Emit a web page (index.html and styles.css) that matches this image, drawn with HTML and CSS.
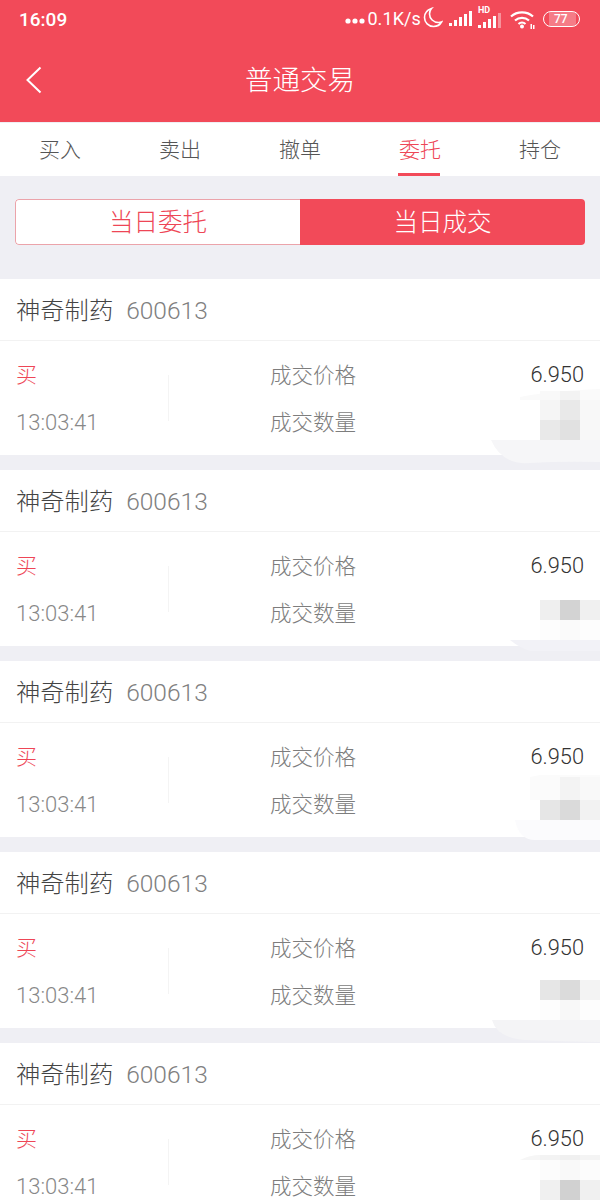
FILE: index.html
```html
<!DOCTYPE html>
<html lang="zh-CN">
<head>
<meta charset="utf-8">
<title>普通交易</title>
<link rel="stylesheet" href="styles.css">
</head>
<body>
<header class="hero">
  <div class="status">
    <span class="clock">16:09</span>
    <div class="status-right">
      <svg class="ic-dots" width="20" height="6" viewBox="0 0 20 6"><circle cx="3" cy="3" r="2.6"/><circle cx="10" cy="3" r="2.6"/><circle cx="17" cy="3" r="2.6"/></svg>
      <span class="speed">0.1K/s</span>
      <svg class="ic-moon" width="20" height="22" viewBox="0 0 20 22"><path d="M8.5 1.5C4 3 1.5 6.5 1.5 10.500c0 5 4 9 9 9 3.500 0 6.500-1.700 8-4.500-1 .4-2 .5-3 .5-5 0-9-3.800-9-8.500 0-2 .7-4 2-5.500z"/></svg>
      <svg class="ic-signal" width="23" height="16" viewBox="0 0 23 16"><rect x="0" y="12" width="3" height="3"/><rect x="5" y="9" width="3" height="6"/><rect x="10" y="6" width="3" height="9"/><rect x="15" y="3" width="3" height="12"/><rect x="20" y="0" width="3" height="15"/></svg>
      <span class="hd-wrap">
        <span class="hd">HD</span>
        <svg class="ic-signal2" width="23" height="16" viewBox="0 0 23 16"><rect x="0" y="12" width="3" height="3"/><rect x="5" y="9" width="3" height="6"/><rect x="10" y="6" width="3" height="9"/><rect x="15" y="3" width="3" height="12"/><rect class="dim" x="20" y="0" width="3" height="15"/></svg>
      </span>
      <svg class="ic-wifi" width="25" height="19" viewBox="0 0 25 19"><path d="M1 6.500C7 1 17 1 23 6.500M5 10.500c4-3.500 10-3.500 14 0M8.500 14c2-1.800 5-1.800 7 0"/><circle cx="12" cy="16.500" r="2"/><rect x="20.500" y="14" width="1.500" height="5"/><rect x="23" y="15" width="1.500" height="4"/></svg>
      <div class="battery"><div class="battery-fill"></div><span class="battery-num">77</span></div>
    </div>
  </div>
  <div class="navbar">
    <svg class="back" width="18" height="28" viewBox="0 0 18 28"><path d="M15.500 1.500 2.500 14l13 12.500"/></svg>
    <h1 class="title">普通交易</h1>
  </div>
</header>

<nav class="tabs">
  <a class="tab">买入</a>
  <a class="tab">卖出</a>
  <a class="tab">撤单</a>
  <a class="tab tab-on">委托</a>
  <a class="tab">持仓</a>
</nav>

<div class="seg-wrap">
  <div class="seg">
    <div class="seg-item">当日委托</div>
    <div class="seg-item seg-on">当日成交</div>
  </div>
</div>

<main class="list">
  <section class="card">
    <div class="card-head"><span class="name">神奇制药</span><span class="code">600613</span></div>
    <div class="card-body">
      <div class="col-left"><div class="row buy">买</div><div class="row time">13:03:41</div></div>
      <div class="divider"></div>
      <div class="col-mid"><div class="row label">成交价格</div><div class="row label">成交数量</div></div>
      <div class="col-right"><div class="row value">6.950</div></div>
    </div>
    <svg class="mosaic" width="200" height="191" viewBox="0 0 200 191">
      <path fill="#fafafa" d="M120 121v-3q30-6 80-8v11z"/>
      <rect x="140" y="112" width="20" height="9" fill="#f9f9f9"/><rect x="160" y="112" width="20" height="9" fill="#f3f3f3"/><rect x="180" y="112" width="20" height="9" fill="#fafafa"/>
      <rect x="140" y="121" width="20" height="20" fill="#f5f5f5"/><rect x="160" y="121" width="20" height="20" fill="#e9e9e9"/><rect x="180" y="121" width="20" height="20" fill="#f8f8f8"/>
      <rect x="140" y="141" width="20" height="20" fill="#e9e9e9"/><rect x="160" y="141" width="20" height="20" fill="#e1e1e1"/><rect x="180" y="141" width="20" height="20" fill="#f8f8f8"/>
      <path fill="#f6f6f8" d="M91 161h109v22q-40-1-70 1-28 2-39-23z"/>
    </svg>
  </section>

  <section class="card">
    <div class="card-head"><span class="name">神奇制药</span><span class="code">600613</span></div>
    <div class="card-body">
      <div class="col-left"><div class="row buy">买</div><div class="row time">13:03:41</div></div>
      <div class="divider"></div>
      <div class="col-mid"><div class="row label">成交价格</div><div class="row label">成交数量</div></div>
      <div class="col-right"><div class="row value">6.950</div></div>
    </div>
    <svg class="mosaic" width="200" height="191" viewBox="0 0 200 191">
      <rect x="140" y="130" width="20" height="20" fill="#efefef"/><rect x="160" y="130" width="20" height="20" fill="#d3d3d3"/><rect x="180" y="130" width="20" height="20" fill="#f0f0f0"/>
      <rect x="140" y="150" width="20" height="20" fill="#fdfdfd"/><rect x="160" y="150" width="20" height="20" fill="#fafafa"/><rect x="180" y="150" width="20" height="20" fill="#fdfdfd"/>
      <path fill="#f2f2f7" d="M110 170h90v11q-50 0-70 0-10-3-20-11z"/>
    </svg>
  </section>

  <section class="card">
    <div class="card-head"><span class="name">神奇制药</span><span class="code">600613</span></div>
    <div class="card-body">
      <div class="col-left"><div class="row buy">买</div><div class="row time">13:03:41</div></div>
      <div class="divider"></div>
      <div class="col-mid"><div class="row label">成交价格</div><div class="row label">成交数量</div></div>
      <div class="col-right"><div class="row value">6.950</div></div>
    </div>
    <svg class="mosaic" width="200" height="191" viewBox="0 0 200 191">
      <path fill="#fbfbfb" d="M130 116q5-1 10-2h60v25h-70z"/>
      <rect x="140" y="116" width="20" height="23" fill="#fbfbfb"/><rect x="160" y="116" width="20" height="23" fill="#f3f3f3"/><rect x="180" y="116" width="20" height="23" fill="#f9f9f9"/>
      <rect x="140" y="139" width="20" height="20" fill="#e6e6e6"/><rect x="160" y="139" width="20" height="20" fill="#dadada"/><rect x="180" y="139" width="20" height="20" fill="#f2f2f2"/>
      <path fill="#fbfbfd" d="M115 159h85v20h-65q-16 0-20-20z"/>
    </svg>
  </section>

  <section class="card">
    <div class="card-head"><span class="name">神奇制药</span><span class="code">600613</span></div>
    <div class="card-body">
      <div class="col-left"><div class="row buy">买</div><div class="row time">13:03:41</div></div>
      <div class="divider"></div>
      <div class="col-mid"><div class="row label">成交价格</div><div class="row label">成交数量</div></div>
      <div class="col-right"><div class="row value">6.950</div></div>
    </div>
    <svg class="mosaic" width="200" height="191" viewBox="0 0 200 191">
      <rect x="140" y="128" width="20" height="20" fill="#e6e6e6"/><rect x="160" y="128" width="20" height="20" fill="#dbdbdb"/><rect x="180" y="128" width="20" height="20" fill="#f3f3f3"/>
      <rect x="140" y="148" width="20" height="20" fill="#fdfdfd"/><rect x="160" y="148" width="20" height="20" fill="#f8f8f8"/><rect x="180" y="148" width="20" height="20" fill="#fdfdfd"/>
      <path fill="#f4f4f6" d="M92 168h108v22q-50-1-75-2-28-2-33-20z"/>
    </svg>
  </section>

  <section class="card">
    <div class="card-head"><span class="name">神奇制药</span><span class="code">600613</span></div>
    <div class="card-body">
      <div class="col-left"><div class="row buy">买</div><div class="row time">13:03:41</div></div>
      <div class="divider"></div>
      <div class="col-mid"><div class="row label">成交价格</div><div class="row label">成交数量</div></div>
      <div class="col-right"><div class="row value">6.950</div></div>
    </div>
    <svg class="mosaic" width="200" height="191" viewBox="0 0 200 191">
      <path fill="#f6f6f6" d="M120 117q10-5 20-5h60v5z"/>
      <rect x="140" y="112" width="20" height="5" fill="#f3f3f3"/><rect x="160" y="112" width="20" height="5" fill="#f0f0f0"/><rect x="180" y="112" width="20" height="5" fill="#f4f4f4"/>
      <rect x="140" y="117" width="20" height="20" fill="#fcfcfc"/><rect x="160" y="117" width="20" height="20" fill="#f9f9f9"/><rect x="180" y="117" width="20" height="20" fill="#fcfcfc"/>
      <rect x="140" y="137" width="20" height="20" fill="#f0f0f0"/><rect x="160" y="137" width="20" height="20" fill="#d1d1d1"/><rect x="180" y="137" width="20" height="20" fill="#f0f0f0"/>
    </svg>
  </section>
</main>
</body>
</html>
```
FILE: styles.css
```css
* { box-sizing: border-box; }
html, body { margin: 0; padding: 0; }
body {
  width: 600px;
  height: 1200px;
  overflow: hidden;
  background: #efeff4;
  font-family: "Noto Sans CJK SC", "Roboto", sans-serif;
  font-weight: 400;
}
.hero { background: #f24a59; height: 122px; color: #fff; }
.status {
  height: 38px;
  padding: 0 20px 0 19px;
  display: flex;
  align-items: center;
  justify-content: space-between;
}
.clock { font: 500 19px/1 "Roboto", sans-serif; }
.status-right { display: flex; align-items: center; }
.ic-dots { fill: #fff; margin: 3px 2px 0 0; }
.speed { font: 400 18px/1 "Roboto", sans-serif; letter-spacing: .1px; }
.ic-moon { fill: none; stroke: #fff; stroke-width: 1.6; margin: 0 0 2px 2px; }
.ic-signal { fill: #fff; margin-left: 6px; }
.ic-signal2 { fill: #fff; }
.ic-signal2 .dim { opacity: .4; }
.hd-wrap { position: relative; display: flex; margin-left: 6px; margin-top: 3px; }
.hd {
  position: absolute;
  left: 0;
  top: -7px;
  font: 700 9px/1 "Roboto", sans-serif;
}
.ic-wifi { fill: #fff; margin-left: 9px; }
.ic-wifi path { fill: none; stroke: #fff; stroke-width: 2.2; }
.battery {
  position: relative;
  width: 37px;
  height: 16px;
  margin-left: 8px;
  border: 1.500px solid #fff;
  border-radius: 8px;
  overflow: hidden;
}
.battery-fill { width: 27px; height: 100%; margin-left: 5px; background: rgba(255,255,255,.28); }
.battery-num {
  position: absolute;
  left: 10px;
  top: 1px;
  font: 500 12px/12px "Roboto", sans-serif;
}
.navbar {
  position: relative;
  height: 84px;
  display: flex;
  align-items: center;
  justify-content: center;
}
.back {
  position: absolute;
  left: 25px;
  top: 28px;
  fill: none;
  stroke: #fff;
  stroke-width: 2;
}
.title { margin: 0 0 2px; font-size: 27.500px; font-weight: 300; line-height: 1; }
.tabs {
  display: flex;
  height: 53px;
  margin-top: 1px;
  background: #fff;
}
.tab {
  flex: 1;
  display: flex;
  align-items: center;
  justify-content: center;
  font-size: 21px;
  font-weight: 300;
  color: #555;
  padding-bottom: 3px;
  position: relative;
}
.tab-on { color: #ee4656; }
.tab-on::after {
  content: "";
  position: absolute;
  left: 38px;
  right: 40px;
  bottom: 0;
  height: 3px;
  background: #f24a59;
}
.seg-wrap { padding: 23px 15px 34px; }
.seg {
  display: flex;
  height: 46px;
  border-radius: 4px;
  overflow: hidden;
  background: #fff;
}
.seg-item {
  flex: 0 0 50%;
  display: flex;
  align-items: center;
  justify-content: center;
  font-size: 24.500px;
  font-weight: 300;
  color: #ee4656;
  padding-bottom: 4px;
  border: 1px solid #eba3aa;
  border-right: 0;
  border-radius: 4px 0 0 4px;
}
.seg-on { background: #f24a59; color: #fff; border: 0; border-radius: 0; }
.list { display: flex; flex-direction: column; gap: 15px; }
.card { position: relative; flex: none; background: #fff; height: 176px; }
.card-head {
  height: 62px;
  padding: 0 16px;
  display: flex;
  align-items: center;
  border-bottom: 1px solid #f2f2f2;
}
.name { font-size: 24.300px; font-weight: 300; color: #444; line-height: 1; margin-bottom: 1px; }
.code { font: 300 24.500px/1 "Roboto", sans-serif; color: #808080; margin: 3px 0 0 13px; }
.card-body { display: flex; padding: 10px 16px 0; height: 114px; }
.row { height: 47px; display: flex; align-items: center; }
.col-left { width: 152px; }
.buy { font-size: 21px; font-weight: 300; color: #ee4656; padding-bottom: 4px; }
.time { font: 300 22px/1 "Roboto", sans-serif; color: #888; padding-top: 3px; }
.divider { width: 1px; height: 46px; margin-top: 24px; background: #f4f4f4; }
.col-mid { margin-left: 101px; }
.label { font-size: 21.500px; font-weight: 300; color: #7d7d7d; padding-bottom: 2px; }
.col-right { margin-left: auto; }
.value { font: 300 21.800px/1 "Roboto", sans-serif; color: #333; padding-top: 1px; }
.mosaic { position: absolute; left: 400px; top: 0; overflow: visible; }
```
